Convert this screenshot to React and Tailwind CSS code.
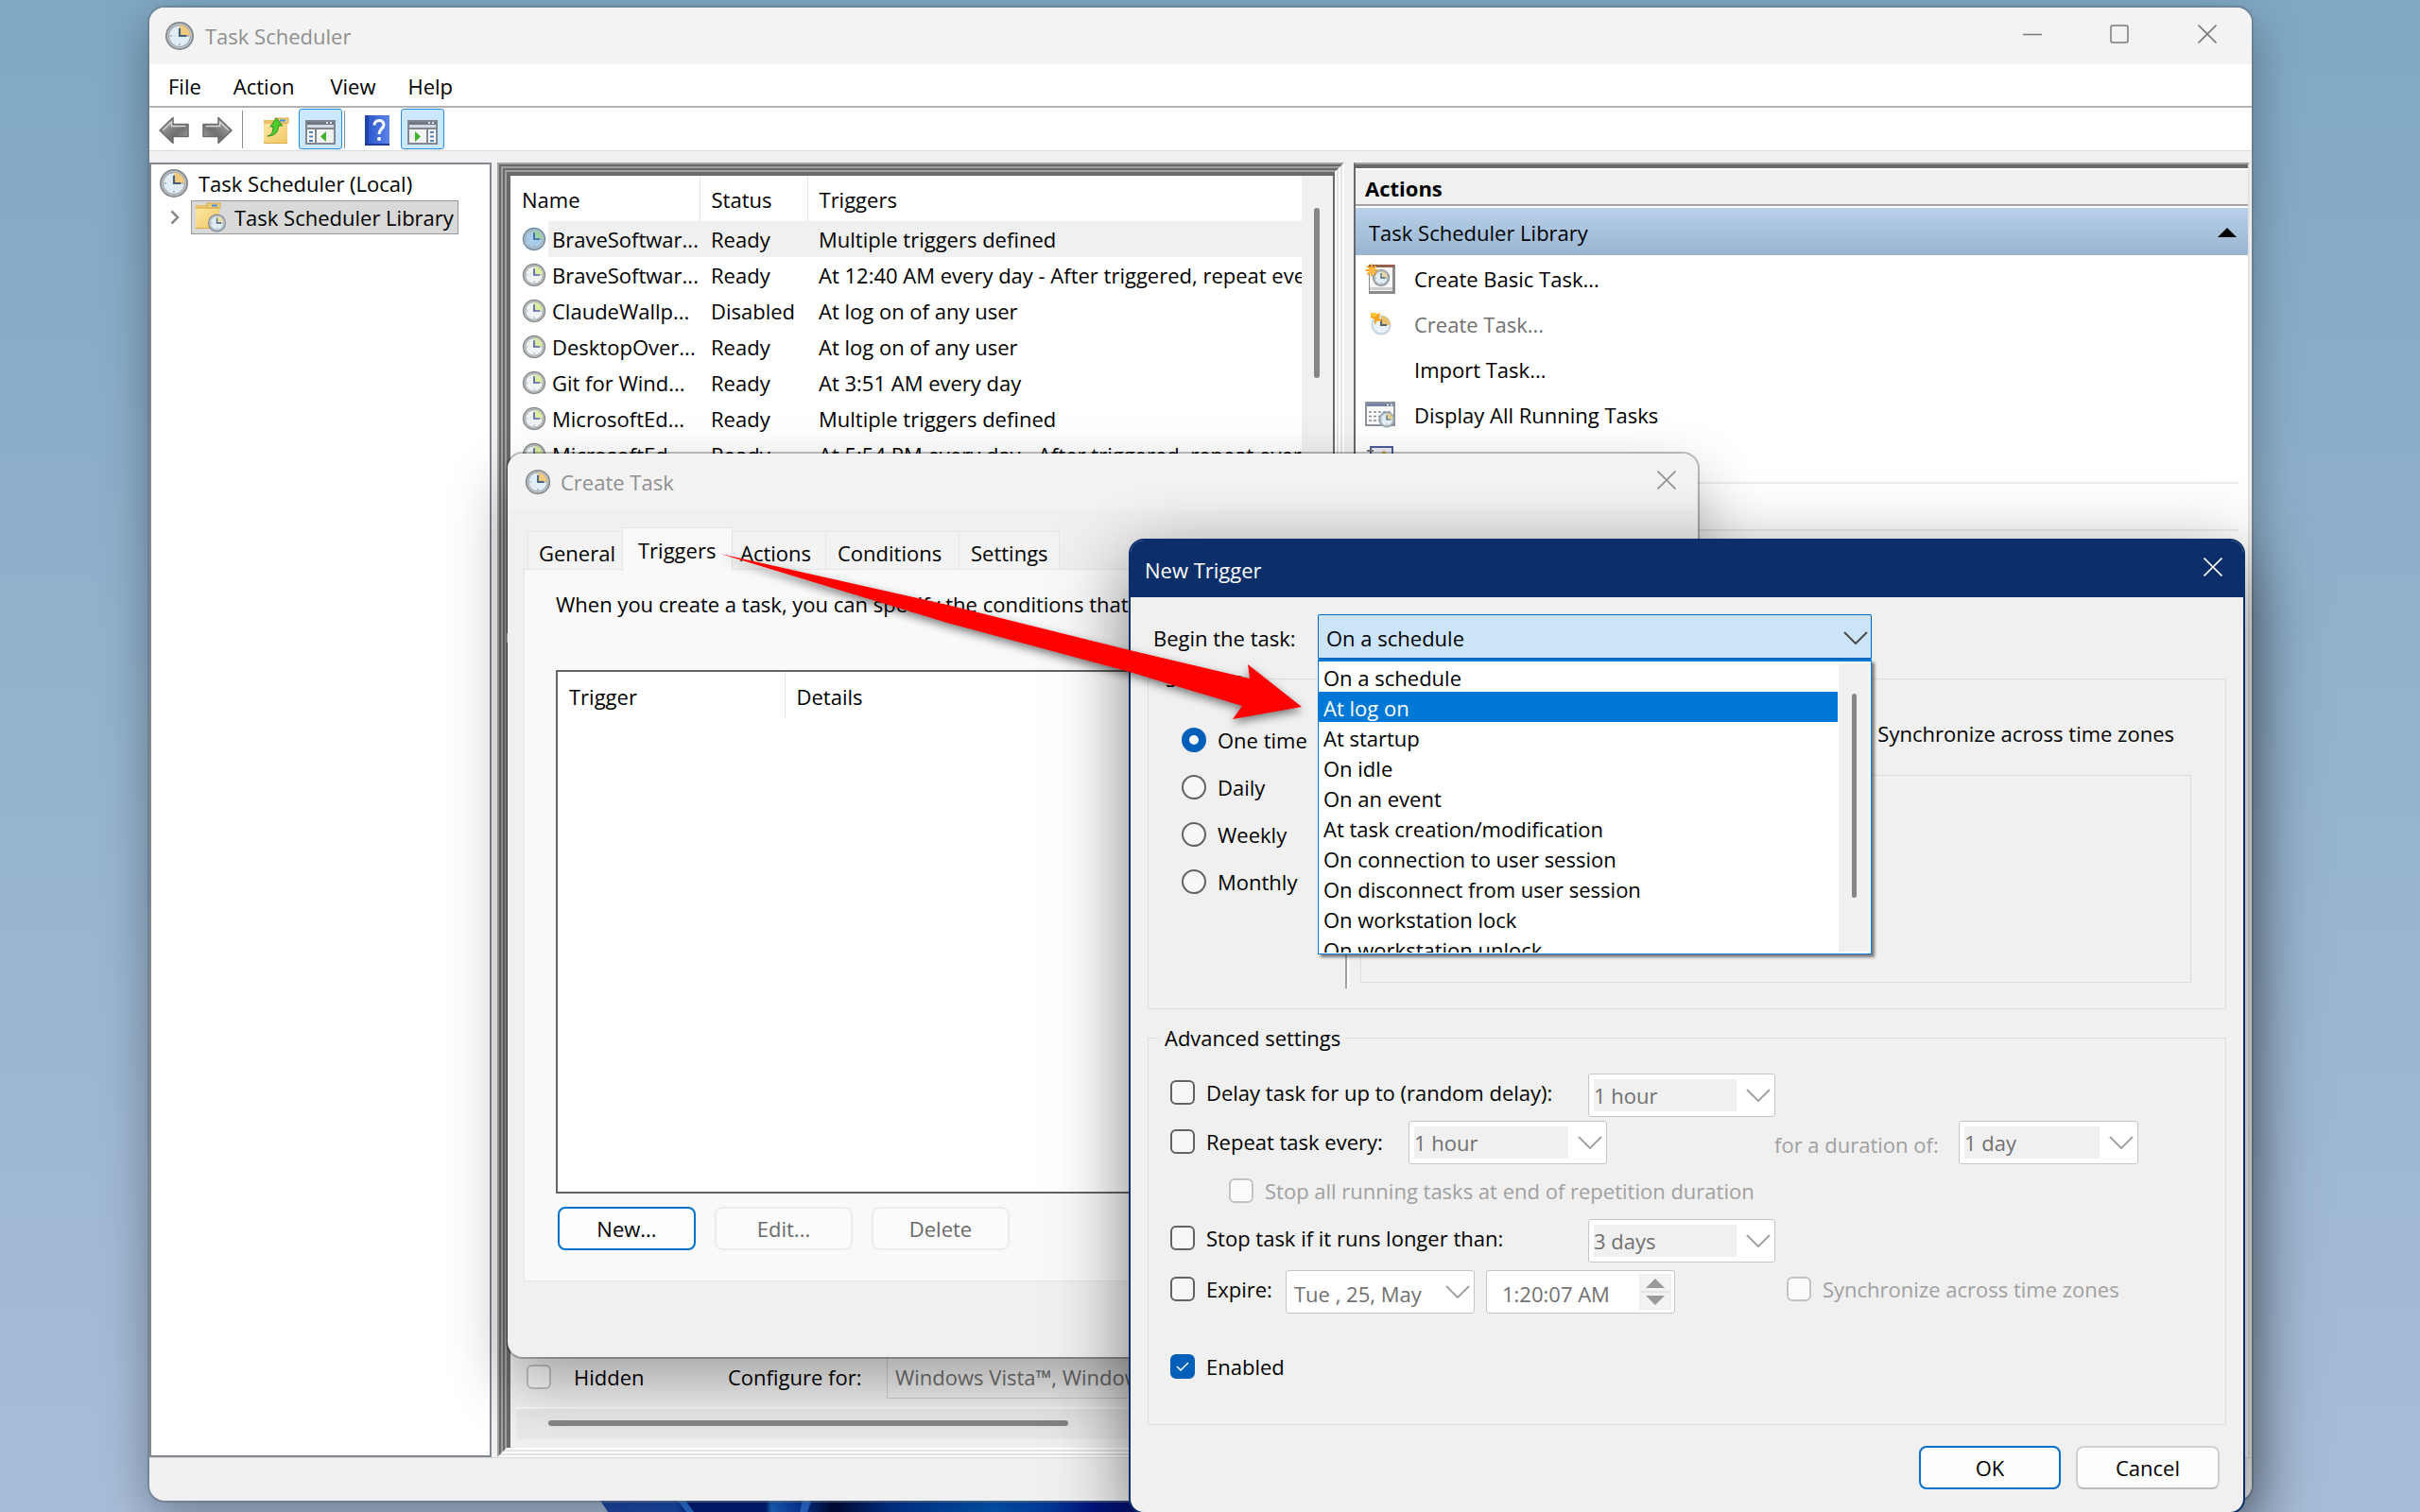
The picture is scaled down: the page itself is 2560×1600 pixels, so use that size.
import React from "react";

const tasks = [
  { name: "BraveSoftwar...", status: "Ready", trigger: "Multiple triggers defined", selected: true },
  { name: "BraveSoftwar...", status: "Ready", trigger: "At 12:40 AM every day - After triggered, repeat every 1 hour" },
  { name: "ClaudeWallp...", status: "Disabled", trigger: "At log on of any user" },
  { name: "DesktopOver...", status: "Ready", trigger: "At log on of any user" },
  { name: "Git for Wind...", status: "Ready", trigger: "At 3:51 AM every day" },
  { name: "MicrosoftEd...", status: "Ready", trigger: "Multiple triggers defined" },
  { name: "MicrosoftEd...", status: "Ready", trigger: "At 5:54 PM every day - After triggered, repeat every 1 hour" },
];

const triggerOptions = [
  "On a schedule",
  "At log on",
  "At startup",
  "On idle",
  "On an event",
  "At task creation/modification",
  "On connection to user session",
  "On disconnect from user session",
  "On workstation lock",
  "On workstation unlock",
];

/* ---------- icons ---------- */

function ClockFace({ cx = 16, cy = 16, r = 15, face = "#e2ecf4", ring = "#85888b", wedge = "#efc97e", hand = "#44617c" }) {
  const inner = r * 0.76;
  return (
    <g>
      <circle cx={cx} cy={cy} r={r} fill={ring} />
      <circle cx={cx} cy={cy} r={r * 0.88} fill="#c3c7ca" />
      <circle cx={cx} cy={cy} r={inner} fill={face} stroke="#94a0aa" strokeWidth={r * 0.07} />
      <path d={`M${cx} ${cy}V${cy - inner}A${inner} ${inner} 0 0 1 ${cx + inner} ${cy}Z`} fill={wedge} />
      <path d={`M${cx} ${cy - r * 0.55}V${cy}H${cx + r * 0.5}`} fill="none" stroke={hand} strokeWidth={r * 0.14} />
      <path
        d={`M${cx - r * 0.66} ${cy}h${r * 0.12}M${cx} ${cy + r * 0.66}v${-r * 0.12}M${cx + r * 0.66} ${cy}h${-r * 0.1}`}
        stroke="#8fa3b3"
        strokeWidth={r * 0.09}
      />
    </g>
  );
}

function ClockIcon({ className = "size-8" }) {
  return (
    <svg viewBox="0 0 32 32" className={className} aria-hidden="true">
      <ClockFace />
    </svg>
  );
}

function TaskIcon({ selected }) {
  return (
    <svg viewBox="0 0 32 32" className="size-[26px]" aria-hidden="true">
      {selected ? (
        <ClockFace face="#a9cde8" ring="#5f89a8" wedge="#9fd3a6" hand="#2e5fa0" />
      ) : (
        <ClockFace face="#f1f4f4" ring="#8a8a87" wedge="#dceca0" hand="#5562a8" />
      )}
    </svg>
  );
}

function FolderShape() {
  return (
    <g>
      <path d="M1 3h12l2 3h11v22H1z" fill="#e9c162" />
      <rect x="13" y="1" width="14" height="5" fill="#f0cf7c" stroke="#d3a94d" />
      <rect x="18" y="2.500" width="6" height="2" fill="#3f8fe0" />
      <path d="M1 7h25v21H1z" fill="url(#folderFill)" />
      <path d="M1 27.500h25" stroke="#d9ab49" />
    </g>
  );
}

function IconDefs() {
  return (
    <svg width="0" height="0" className="absolute" aria-hidden="true">
      <defs>
        <linearGradient id="folderFill" x1="0" y1="0" x2="1" y2="1">
          <stop offset="0" stopColor="#fde6a2" />
          <stop offset="1" stopColor="#f0c763" />
        </linearGradient>
        <linearGradient id="arrowFill" x1="0" y1="0" x2="1" y2="1">
          <stop offset="0" stopColor="#b9b9b9" />
          <stop offset="0.6" stopColor="#6f6f6f" />
          <stop offset="1" stopColor="#b0b0b0" />
        </linearGradient>
        <linearGradient id="helpFill" x1="0" y1="0" x2="1" y2="0">
          <stop offset="0" stopColor="#1f3fae" />
          <stop offset="0.15" stopColor="#2f58cf" />
          <stop offset="1" stopColor="#5d85e8" />
        </linearGradient>
      </defs>
    </svg>
  );
}

function FolderClockIcon() {
  return (
    <svg viewBox="0 0 34 32" className="h-8 w-[34px]" aria-hidden="true">
      <FolderShape />
      <ClockFace cx={23.5} cy={22} r={9.5} ring="#7b8a94" wedge="#e8dcae" />
    </svg>
  );
}

function ArrowIcon({ flip }) {
  return (
    <svg viewBox="0 0 34 30" className={flip ? "h-[30px] w-[34px] -scale-x-100" : "h-[30px] w-[34px]"} aria-hidden="true">
      <path
        d="M2 15 16 1.500v7h16v13H16v7z"
        fill="url(#arrowFill)"
        stroke="#6a6a6a"
        strokeWidth="1.500"
        strokeLinejoin="round"
      />
      <path d="M5.500 14.500 14.500 6v4.500h15" fill="none" stroke="#d8d8d8" strokeWidth="1.300" />
    </svg>
  );
}

function FolderUpIcon() {
  return (
    <svg viewBox="0 0 28 30" className="h-[30px] w-7" aria-hidden="true">
      <FolderShape />
      <path d="M5 20c4-1 6-4 6-10H8L14.500 1l6 8H16.500c0 7-4 11-11.500 11z" fill="#4fce32" stroke="#2b8d1b" strokeWidth="1" strokeLinejoin="round" />
    </svg>
  );
}

function PaneIcon({ right }) {
  return (
    <svg viewBox="0 0 32 26" className="h-[26px] w-8" aria-hidden="true">
      <rect x="1" y="1" width="30" height="24" fill="#fff" stroke="#82878f" strokeWidth="2" />
      <rect x="2" y="2" width="28" height="3" fill="#6b7787" />
      <path d="M22 3h2M26 3h2" stroke="#d5e3f2" strokeWidth="2" />
      <rect x="2" y="5" width="28" height="3" fill="#d3dbe4" />
      <rect x="2" y="8" width="28" height="2" fill="#82878f" />
      {right ? (
        <g>
          <path d="M21 10v15" stroke="#82878f" strokeWidth="2" />
          <path d="M24 13h4M24 17.500h4M24 22h4" stroke="#4a7ec2" strokeWidth="1.800" />
          <rect x="2" y="10" width="18" height="14" fill="#f1f3f3" />
          <path d="M8 12v11l6-5.500z" fill="#43b02a" />
        </g>
      ) : (
        <g>
          <path d="M11 10v15" stroke="#82878f" strokeWidth="2" />
          <path d="M4 13h4M4 17.500h4M4 22h4" stroke="#4a7ec2" strokeWidth="1.800" />
          <rect x="12" y="10" width="18" height="14" fill="#f1f3f3" />
          <path d="M22 12v11l-6-5.500z" fill="#43b02a" />
        </g>
      )}
    </svg>
  );
}

function HelpIcon() {
  return (
    <svg viewBox="0 0 26 32" className="h-8 w-[26px]" aria-hidden="true">
      <rect width="26" height="32" fill="url(#helpFill)" />
      <path d="M0 0h4v32H0z" fill="#2443a8" />
      <path d="M0 30h26v2H0z" fill="#1f3a97" />
      <path d="M10 10.500c0-6.500 10-6.500 10-.5 0 4-5 4.500-5 10" fill="none" stroke="#fff" strokeWidth="3" />
      <circle cx="15" cy="25" r="2" fill="#fff" />
    </svg>
  );
}

function Spark({ cx, cy, r }) {
  const d = r * 0.7;
  return (
    <g>
      <path
        d={`M${cx - r} ${cy}H${cx + r}M${cx} ${cy - r}V${cy + r}M${cx - d} ${cy - d}L${cx + d} ${cy + d}M${cx + d} ${cy - d}L${cx - d} ${cy + d}`}
        stroke="#f5a623"
        strokeWidth="2"
      />
      <circle cx={cx} cy={cy} r={r * 0.5} fill="#ffb93b" />
    </g>
  );
}

function BasicTaskIcon() {
  return (
    <svg viewBox="0 0 32 32" className="size-8" aria-hidden="true">
      <rect x="4" y="1" width="28" height="31" fill="#8c8c8c" />
      <rect x="5" y="3" width="24" height="26" fill="#f6f6f6" />
      <path d="M4 1h27v3H4z" fill="#96604f" />
      <path d="M5 25h24v3H5z" fill="#cfcfcf" />
      <ClockFace cx={17} cy={15} r={9} ring="#7d8286" wedge="#e9d9a3" face="#dfeef2" />
      <Spark cx={7} cy={7} r={6.5} />
    </svg>
  );
}

function NewTaskIcon() {
  return (
    <svg viewBox="0 0 32 32" className="size-8" aria-hidden="true">
      <circle cx="17" cy="17" r="10.500" fill="#c4d3dd" />
      <circle cx="17" cy="17" r="8.500" fill="#e7f1f6" />
      <path d="M17 17V7a10 10 0 0 1 10 10z" fill="#e8c173" />
      <path d="M17 11v6h6" fill="none" stroke="#54656f" strokeWidth="2" />
      <path d="m6 4 5 2 5-2-1 5 3 4-5-.5L10 17V11L6 9z" fill="#fba41f" />
      <path d="M6 4h6v4H7z" fill="#ffc933" />
    </svg>
  );
}

function RunningTasksIcon() {
  return (
    <svg viewBox="0 0 32 28" className="h-7 w-8" aria-hidden="true">
      <rect x="1" y="1" width="30" height="24" fill="#fafafa" stroke="#8d939b" strokeWidth="2" />
      <rect x="2" y="2" width="28" height="3" fill="#7384a6" />
      <path d="M23 3.500h2M27 3.500h2" stroke="#fff" strokeWidth="1.500" />
      <path d="M4 11h23M4 15.500h14M4 20h12" stroke="#8a8a8a" strokeWidth="1.600" strokeDasharray="3 2" />
      <ClockFace cx={23} cy={19} r={8.5} ring="#8296a3" wedge="#e9d08f" face="#e0f0f5" />
    </svg>
  );
}

function HistoryIcon() {
  return (
    <svg viewBox="0 0 32 32" className="size-8" aria-hidden="true">
      <rect x="6" y="2" width="23" height="28" fill="#e8ebf3" stroke="#4c5d9b" strokeWidth="2" />
      <path d="M2 6h7M2 12h7" stroke="#777" strokeWidth="2" />
      <path d="m20 5 5 9H15z" fill="#d8bd3a" />
    </svg>
  );
}

function CloseIcon({ className }) {
  return (
    <svg viewBox="0 0 20 20" className={className} aria-hidden="true">
      <path d="M.5.5l19 19M19.500.5l-19 19" fill="none" stroke="currentColor" strokeWidth="1.600" />
    </svg>
  );
}

function Chevron({ className }) {
  return (
    <svg viewBox="0 0 26 14" className={className} aria-hidden="true">
      <path d="M1 1l12 12L25 1" fill="none" stroke="currentColor" strokeWidth="2" />
    </svg>
  );
}

/* ---------- form parts ---------- */

function CheckBox({ id, label, disabled, checked, className = "" }) {
  return (
    <label htmlFor={id} className={"flex h-10 shrink-0 items-center gap-3 whitespace-nowrap " + (disabled ? "text-[#a0a0a0] " : "text-black ") + className}>
      <span className="grid size-[26px] shrink-0 place-items-center">
        <input
          id={id}
          type="checkbox"
          disabled={disabled}
          defaultChecked={checked}
          className="peer col-start-1 row-start-1 size-[26px] appearance-none rounded-[6px] border-2 border-[#626262] bg-[#f7f7f7] checked:border-[#005fb8] checked:bg-[#005fb8] disabled:border-[#c3c3c3] disabled:bg-[#fbfbfb]"
        />
        <svg viewBox="0 0 14 10" className="pointer-events-none invisible col-start-1 row-start-1 h-[10px] w-[14px] peer-checked:visible" aria-hidden="true">
          <path d="M1 5l4 4 8-8" fill="none" stroke="#fff" strokeWidth="1.500" />
        </svg>
      </span>
      {label}
    </label>
  );
}

function DisabledCombo({ label, value, className }) {
  return (
    <div className={"flex h-[46px] shrink-0 items-center rounded-[3px] border border-[#c4c4c4] bg-white pl-[5px] pr-1 text-[#707070] " + className}>
      <select aria-label={label} disabled className="h-[34px] min-w-0 flex-1 appearance-none bg-[#f0f0f0] leading-8 opacity-100">
        <option>{value}</option>
      </select>
      <Chevron className="ml-2.5 h-3.5 w-[26px] text-[#a3a3a3]" />
    </div>
  );
}

/* Sunken edge made of alternating dark and light lines */
function Sunken({ children, depth = 0, max = 4 }) {
  const edge =
    depth % 2 === 0
      ? "border-t-[#a0a0a0] border-l-[#a0a0a0] border-r-white border-b-white"
      : "border-t-[#696969] border-l-[#696969] border-r-[#e3e3e3] border-b-[#e3e3e3]";
  return (
    <div className={"flex min-h-0 min-w-0 flex-1 flex-col border-2 " + edge}>
      {depth + 1 < max ? (
        <Sunken depth={depth + 1} max={max}>
          {children}
        </Sunken>
      ) : (
        children
      )}
    </div>
  );
}

/* ---------- main window ---------- */

function TitleBar() {
  return (
    <header className="flex h-[60px] shrink-0 items-center bg-[#f3f3f3] pl-4">
      <ClockIcon />
      <h1 className="ml-[11px] flex-1 text-[#8f8f8f]">Task Scheduler</h1>
      <button type="button" aria-label="Minimize" className="flex h-full w-[92px] items-center justify-center pb-1 text-[#7a7a7a]">
        <svg viewBox="0 0 20 20" className="size-5">
          <path d="M0 10.500h20" stroke="currentColor" strokeWidth="1.500" />
        </svg>
      </button>
      <button type="button" aria-label="Maximize" className="flex h-full w-[92px] items-center justify-center pb-1 text-[#7a7a7a]">
        <svg viewBox="0 0 20 20" className="size-5">
          <rect x="1" y="1" width="18" height="18" rx="2" fill="none" stroke="currentColor" strokeWidth="1.500" />
        </svg>
      </button>
      <button type="button" aria-label="Close" className="flex h-full w-[94px] items-center justify-center pb-1 text-[#7a7a7a]">
        <CloseIcon className="size-5" />
      </button>
    </header>
  );
}

function MenuBar() {
  return (
    <nav className="flex h-[46px] shrink-0 items-center gap-[34px] border-b-2 border-[#b2b2b2] bg-white pl-5 pt-0.5">
      <button type="button">File</button>
      <button type="button">Action</button>
      <button type="button" className="ml-1">View</button>
      <button type="button">Help</button>
    </nav>
  );
}

function Toolbar() {
  return (
    <div className="flex h-[46px] shrink-0 items-center border-b border-[#dadada] bg-white pl-[9px]">
      <button type="button" aria-label="Back" className="pt-0.5"><ArrowIcon /></button>
      <button type="button" aria-label="Forward" className="ml-3 pt-0.5"><ArrowIcon flip /></button>
      <span className="ml-[9px] h-10 w-px bg-[#8d8d8d]" />
      <button type="button" aria-label="Up one level" className="ml-[21px] pt-1"><FolderUpIcon /></button>
      <button type="button" aria-label="Show or hide console tree" className="ml-2.5 flex h-[43px] w-[46px] items-end justify-center rounded-[3px] border border-[#2a8dde] bg-[#cce8ff] pb-1">
        <PaneIcon />
      </button>
      <span className="ml-0.5 h-10 w-px bg-[#8d8d8d]" />
      <button type="button" aria-label="Help" className="ml-[21px] pt-0.5"><HelpIcon /></button>
      <button type="button" aria-label="Show or hide action pane" className="ml-3 flex h-[43px] w-[46px] items-end justify-center rounded-[3px] border border-[#2a8dde] bg-[#cce8ff] pb-1">
        <PaneIcon right />
      </button>
    </div>
  );
}

function TreePane() {
  return (
    <aside className="w-[362px] shrink-0 border-2 border-[#828790] bg-white pl-2 pt-0.5">
      <div className="flex h-9 items-center gap-2.5">
        <ClockIcon />
        <span>Task Scheduler (Local)</span>
      </div>
      <div className="flex h-9 items-center">
        <button type="button" aria-label="Expand" className="flex w-[34px] justify-center">
          <svg viewBox="0 0 10 16" className="h-4 w-2.5" aria-hidden="true">
            <path d="M1.500 1.500 8 8l-6.500 6.500" fill="none" stroke="#8a8a8a" strokeWidth="2.500" />
          </svg>
        </button>
        <button type="button" className="flex h-9 items-center gap-2 border border-[#999] bg-[#d9d9d9] pl-[3px] pr-1">
          <FolderClockIcon />
          <span>Task Scheduler Library</span>
        </button>
      </div>
    </aside>
  );
}

function TaskTable() {
  return (
    <section className="flex h-[488px] shrink-0 border-2 border-l-4 border-t-4 border-[#696969] bg-white">
      <div className="min-w-0 flex-1 overflow-hidden">
        <table className="w-full table-fixed border-collapse text-left">
          <colgroup>
            <col className="w-10" />
            <col className="w-[160px]" />
            <col className="w-[114px]" />
            <col />
          </colgroup>
          <thead>
            <tr className="h-12">
              <th colSpan={2} className="border-r border-[#e5e5e5] pl-3 pt-0.5 font-normal">Name</th>
              <th className="border-r border-[#e5e5e5] pl-3 pt-0.5 font-normal">Status</th>
              <th className="pl-3 pt-0.5 font-normal">Triggers</th>
            </tr>
          </thead>
          <tbody>
            {tasks.map((t, i) => (
              <tr key={i} className="h-[38px]">
                <td className="pl-3"><TaskIcon selected={t.selected} /></td>
                <td className={"whitespace-nowrap pl-1 " + (t.selected ? "bg-[#f0f0f0]" : "")}>{t.name}</td>
                <td className={"whitespace-nowrap pl-3 " + (t.selected ? "bg-[#f0f0f0]" : "")}>{t.status}</td>
                <td className={"overflow-hidden whitespace-nowrap pl-3 " + (t.selected ? "bg-[#f0f0f0]" : "")}>{t.trigger}</td>
              </tr>
            ))}
          </tbody>
        </table>
      </div>
      <div className="w-[33px] shrink-0 bg-[#f0f0f0] pl-[13px] pt-[34px]">
        <div className="h-[180px] w-1.5 rounded-full bg-[#858585]" />
      </div>
    </section>
  );
}

function PreviewPane() {
  return (
    <section className="mt-2.5 flex min-h-0 flex-1 flex-col justify-end border-l-4 border-t-4 border-[#696969] bg-[#f0f0f0]">
      <div className="flex h-[46px] items-center">
        <CheckBox id="hidden" label={<span className="ml-3 text-black">Hidden</span>} disabled className="ml-[17px] w-[213px]" />
        <label htmlFor="configure" className="w-[168px]">Configure for:</label>
        <select id="configure" disabled className="h-[46px] w-[420px] appearance-none border border-[#cfcfcf] px-2 text-[#707070] opacity-100">
          <option>Windows Vista™, Windows Server™ 2008</option>
        </select>
      </div>
      <div className="mb-[9px] ml-1.5 mt-[9px] h-[34px] border-t-2 border-[#fafafa] bg-[#e8e8e8] pl-[34px] pt-3">
        <div className="h-1.5 w-[550px] rounded-full bg-[#858585]" />
      </div>
    </section>
  );
}

function ActionRow({ icon, label, muted }) {
  return (
    <button type="button" className={"flex h-12 w-full items-center pl-2.5 pt-0.5 text-left " + (muted ? "text-[#707070]" : "text-black")}>
      <span className="mr-5 flex h-8 w-8 items-center">{icon}</span>
      {label}
    </button>
  );
}

function ActionsPane() {
  return (
    <aside className="flex w-[948px] shrink-0 flex-col border-x-2 border-t-2 border-l-[#696969] border-r-[#e3e3e3] border-t-[#a0a0a0]">
      <div className="flex min-h-0 flex-1 flex-col border-t-4 border-[#696969] bg-white">
        <h2 className="mt-0.5 flex h-[38px] shrink-0 items-center border-b-2 border-[#a0a0a0] bg-[#f0f0f0] pl-2.5 pt-0.5 font-bold">Actions</h2>
        <button type="button" className="mt-0.5 flex h-[50px] w-full shrink-0 items-center justify-between bg-linear-to-b from-[#b9d1ea] to-[#99b4d1] pl-3.5 pr-3 pt-0.5">
          <span>Task Scheduler Library</span>
          <svg viewBox="0 0 20 10" className="h-2.5 w-5" aria-hidden="true">
            <path d="M10 0l10 10H0z" />
          </svg>
        </button>
        <ActionRow icon={<BasicTaskIcon />} label="Create Basic Task..." />
        <ActionRow icon={<NewTaskIcon />} label="Create Task..." muted />
        <ActionRow label="Import Task..." />
        <ActionRow icon={<RunningTasksIcon />} label="Display All Running Tasks" />
        <ActionRow icon={<HistoryIcon />} label="Enable All Tasks History" />
        <hr className="mr-2.5 border-t-2 border-[#ededed]" />
        <ActionRow label="New Folder..." />
        <hr className="mr-2.5 border-t-2 border-[#ededed]" />
      </div>
    </aside>
  );
}

/* ---------- dialogs ---------- */

function CreateTaskDialog() {
  const idleTab = "-ml-px h-10 border border-b-0 border-[#e5e5e5] bg-[#f3f3f3] text-left";
  return (
    <section
      aria-label="Create Task"
      className="absolute left-[537px] top-[480px] flex h-[956px] w-[1259px] flex-col overflow-hidden rounded-2xl bg-[#f0f0f0] shadow-[0_0_0_2px_rgba(0,0,0,0.25),0_28px_64px_rgba(0,0,0,0.32)]"
    >
      <header className="flex h-[60px] items-center bg-[#f3f3f3] pl-[18px] pr-[23px]">
        <ClockIcon className="size-7" />
        <h2 className="ml-2.5 flex-1 text-[#8f8f8f]">Create Task</h2>
        <button type="button" aria-label="Close" className="pb-1 text-[#8f8f8f]">
          <CloseIcon className="size-5" />
        </button>
      </header>
      <div className="mt-[18px] flex h-11 items-end pl-[22px]">
        <button type="button" className={idleTab + " w-[101px] pl-[11px] pt-1"}>General</button>
        <button type="button" className="relative z-10 -mb-0.5 -ml-px h-[46px] w-[117px] border border-b-0 border-[#e5e5e5] bg-[#f9f9f9] pl-4 text-left">Triggers</button>
        <button type="button" className={idleTab + " w-[100px] pl-2 pt-1"}>Actions</button>
        <button type="button" className={idleTab + " w-[142px] pl-3 pt-1"}>Conditions</button>
        <button type="button" className={idleTab + " w-[107px] pl-3 pt-1"}>Settings</button>
      </div>
      <div className="mx-[17px] h-[754px] border border-[#e5e5e5] bg-[#f9f9f9] px-[33px] pt-5">
        <p className="whitespace-nowrap">When you create a task, you can specify the conditions that will trigger the task.</p>
        <div className="mt-[54px] h-[554px] border-2 border-[#646464] bg-white">
          <table className="w-full table-fixed text-left">
            <thead>
              <tr className="h-12">
                <th className="w-[240px] border-r border-[#e5e5e5] pl-3 pt-1 font-normal">Trigger</th>
                <th className="pl-3 pt-1 font-normal">Details</th>
              </tr>
            </thead>
          </table>
        </div>
        <div className="mt-3.5 flex gap-5 pl-0.5">
          <button type="button" className="h-[46px] w-[146px] rounded-lg border-2 border-[#0070cc] bg-[#fdfdfd]">New...</button>
          <button type="button" disabled className="h-[46px] w-[146px] rounded-lg border-2 border-[#ececec] bg-[#fbfbfb] text-[#6a6a6a]">Edit...</button>
          <button type="button" disabled className="h-[46px] w-[146px] rounded-lg border-2 border-[#ececec] bg-[#fbfbfb] text-[#6a6a6a]">Delete</button>
        </div>
      </div>
    </section>
  );
}

function TriggerCombo() {
  return (
    <div className="relative w-[586px]">
      <select
        id="begin"
        defaultValue="On a schedule"
        className="h-12 w-full appearance-none rounded-[2px] border border-b-2 border-[#0067c0] bg-[#cce4f7] px-2 pt-0.5"
      >
        {triggerOptions.map((o) => (
          <option key={o}>{o}</option>
        ))}
      </select>
      <Chevron className="pointer-events-none absolute right-1 top-[18px] h-3.5 w-[26px] text-[#4c4c4c]" />
      <div className="absolute left-0 top-12 z-20 flex h-[312px] w-full border border-t-2 border-[#0078d7] bg-white shadow-[3px_3px_3px_rgba(0,0,0,0.5)]">
        <ul role="listbox" aria-label="Begin the task" className="h-[308px] flex-1 overflow-hidden">
          {triggerOptions.map((o) => (
            <li
              key={o}
              role="option"
              aria-selected={o === "At log on"}
              className={"flex h-8 items-center whitespace-nowrap pl-[5px] pt-0.5 " + (o === "At log on" ? "bg-[#0078d7] text-white" : "text-black")}
            >
              {o}
            </li>
          ))}
        </ul>
        <div className="mb-0.5 ml-px mr-0.5 mt-0.5 w-8 bg-[#f0f0f0] pl-3.5 pt-8">
          <div className="h-[216px] w-[5px] rounded-full bg-[#858585]" />
        </div>
      </div>
    </div>
  );
}

function NewTriggerDialog() {
  return (
    <section
      aria-label="New Trigger"
      className="absolute left-[1194px] top-[570px] flex w-[1181px] flex-col overflow-hidden rounded-2xl border-2 border-[#0c2f69] bg-[#f0f0f0] pb-6 shadow-[0_24px_80px_rgba(0,0,0,0.5)]"
    >
      <header className="flex h-[60px] items-center justify-between bg-[#0c2f69] pl-[15px] pr-[22px] text-white">
        <h2 className="pt-0.5">New Trigger</h2>
        <button type="button" aria-label="Close" className="pb-1">
          <CloseIcon className="size-5" />
        </button>
      </header>

      <div className="flex items-center pl-6 pt-[18px]">
        <label htmlFor="begin" className="w-[174px] whitespace-nowrap pt-0.5">Begin the task:</label>
        <TriggerCombo />
      </div>

      <fieldset className="mx-[18px] mt-1 h-[366px] border border-[#dcdcdc]">
        <legend className="ml-3 px-1.5">Settings</legend>
        <div className="flex items-start">
          <div className="w-[208px] shrink-0 pl-[35px] pt-6">
            {["One time", "Daily", "Weekly", "Monthly"].map((name) => (
              <label key={name} className="flex h-[50px] items-center gap-3 whitespace-nowrap">
                <input
                  type="radio"
                  name="schedule"
                  defaultChecked={name === "One time"}
                  className="size-[26px] shrink-0 appearance-none rounded-full border-2 border-[#626262] bg-[#f7f7f7] checked:border-8 checked:border-[#005fb8] checked:bg-white"
                />
                {name}
              </label>
            ))}
          </div>
          <div className="h-[312px] w-1 shrink-0 border-x-2 border-l-[#a0a0a0] border-r-white" />
          <div className="ml-3 mr-9 flex-1">
            <div className="flex h-[86px] items-center justify-end pb-0.5 pr-[18px]">
              <CheckBox id="sync" label="Synchronize across time zones" />
            </div>
            <div className="h-[220px] border border-[#dcdcdc]" />
          </div>
        </div>
      </fieldset>

      <fieldset className="mx-[18px] mt-3.5 h-[426px] border border-[#dcdcdc] pl-[23px]">
        <legend className="-ml-3 px-1.5">Advanced settings</legend>
        <div className="flex pt-[22px]">
          <CheckBox id="delay" label="Delay task for up to (random delay):" className="w-[442px]" />
          <DisabledCombo label="Random delay" value="1 hour" className="w-[198px]" />
        </div>
        <div className="mt-1 flex">
          <CheckBox id="repeat" label="Repeat task every:" className="mt-0.5 w-[252px]" />
          <DisabledCombo label="Repeat interval" value="1 hour" className="w-[210px]" />
          <span className="ml-[177px] w-[195px] self-center whitespace-nowrap pt-1 text-[#a0a0a0]">for a duration of:</span>
          <DisabledCombo label="Duration" value="1 day" className="w-[190px]" />
        </div>
        <div className="mt-2 flex pl-[62px]">
          <CheckBox id="stop-all" label="Stop all running tasks at end of repetition duration" disabled />
        </div>
        <div className="mt-2.5 flex">
          <CheckBox id="stop-long" label="Stop task if it runs longer than:" className="w-[442px]" />
          <DisabledCombo label="Longest run time" value="3 days" className="w-[198px]" />
        </div>
        <div className="mt-2 flex">
          <CheckBox id="expire" label="Expire:" className="w-[122px]" />
          <div className="flex h-[46px] w-[200px] items-center rounded-[3px] border border-[#c4c4c4] bg-white pr-1 text-[#707070]">
            <input aria-label="Expiry date" disabled defaultValue="Tue , 25, May" className="h-full min-w-0 flex-1 pl-2 pt-1" />
            <Chevron className="h-3.5 w-[26px] text-[#a3a3a3]" />
          </div>
          <div className="ml-3 flex h-[46px] w-[200px] items-center rounded-[3px] border border-[#c4c4c4] bg-white pr-[3px] text-[#707070]">
            <input aria-label="Expiry time" disabled defaultValue="1:20:07 AM" className="h-full min-w-0 flex-1 pl-4 pt-1" />
            <div className="flex h-[38px] w-[34px] flex-col border-2 border-[#f0f0f0] text-[#9a9a9a]">
              <button type="button" disabled aria-label="Later" className="flex flex-1 items-center justify-center border-b border-[#e4e4e4] bg-[#f3f3f3]">
                <svg viewBox="0 0 20 10" className="h-2.5 w-5" aria-hidden="true"><path d="M10 0l10 10H0z" fill="currentColor" /></svg>
              </button>
              <button type="button" disabled aria-label="Earlier" className="flex flex-1 items-center justify-center border-t border-[#e4e4e4] bg-[#f3f3f3]">
                <svg viewBox="0 0 20 10" className="h-2.5 w-5" aria-hidden="true"><path d="M10 10L0 0h20z" fill="currentColor" /></svg>
              </button>
            </div>
          </div>
          <CheckBox id="sync-expire" label="Synchronize across time zones" disabled className="ml-[118px]" />
        </div>
        <div className="mt-9 flex">
          <CheckBox id="enabled" label="Enabled" checked />
        </div>
      </fieldset>

      <footer className="mt-[22px] flex justify-end gap-4 pr-[25px]">
        <button type="button" className="h-[46px] w-[150px] rounded-lg border-2 border-[#0070cc] bg-[#fdfdfd]">OK</button>
        <button type="button" className="h-[46px] w-[152px] rounded-lg border-2 border-[#d0d0d0] border-b-[#bcbcbc] bg-[#fdfdfd]">Cancel</button>
      </footer>
    </section>
  );
}

function Wallpaper() {
  return (
    <svg viewBox="0 0 600 20" preserveAspectRatio="none" className="absolute bottom-0 left-[630px] h-5 w-[600px]" aria-hidden="true">
      <defs>
        <linearGradient id="bloom" x1="0" x2="1" y1="0" y2="0">
          <stop offset="0" stopColor="#2048a8" />
          <stop offset="0.14" stopColor="#1c50b8" />
          <stop offset="0.17" stopColor="#001f80" />
          <stop offset="0.3" stopColor="#001f80" />
          <stop offset="0.31" stopColor="#1c6fd6" />
          <stop offset="0.36" stopColor="#0a3fae" />
          <stop offset="0.42" stopColor="#000c3c" />
          <stop offset="0.52" stopColor="#0038a0" />
          <stop offset="0.7" stopColor="#0060c8" />
          <stop offset="0.8" stopColor="#0048c0" />
          <stop offset="0.88" stopColor="#0018a0" />
          <stop offset="1" stopColor="#001880" />
        </linearGradient>
      </defs>
      <path d="M0 0h600v20H13z" fill="url(#bloom)" />
      <path d="M92 4l12 16h-8L84 4zM230 4h-10l-4 16h8z" fill="#2b74e0" />
    </svg>
  );
}

function PointerArrow() {
  return (
    <svg viewBox="0 0 640 200" className="pointer-events-none absolute left-[750px] top-[570px] z-30 h-[200px] w-[640px] drop-shadow-[0_4px_5px_rgba(0,0,0,0.5)]" aria-hidden="true">
      <path d="M12 16 252 70 445 118 572 148 570 133 627 178 554 191 564 177 445 141 252 89z" fill="#ff0000" />
    </svg>
  );
}

export default function App() {
  return (
    <main className="relative h-screen w-full overflow-hidden bg-linear-to-b from-[#80a8c4] to-[#a8bdd8] font-['Open_Sans','Noto_Sans',sans-serif] text-[22px] leading-8 text-black">
      <IconDefs />
      <Wallpaper />
      <div className="absolute bottom-3 left-[158px] right-[178px] top-2 flex flex-col overflow-hidden rounded-2xl bg-[#f0f0f0] shadow-[0_0_0_2px_rgba(100,115,130,0.55),0_16px_50px_rgba(0,0,0,0.35)]">
        <TitleBar />
        <MenuBar />
        <Toolbar />
        <div className="flex min-h-0 flex-1 pr-0.5 pt-3">
          <TreePane />
          <div className="ml-1.5 mr-2.5 flex min-w-0 flex-1">
            <Sunken max={5}>
              <TaskTable />
              <PreviewPane />
            </Sunken>
          </div>
          <ActionsPane />
        </div>
        <div className="h-[46px] shrink-0 border-t border-[#d7d7d7]" />
      </div>
      <CreateTaskDialog />
      <NewTriggerDialog />
      <PointerArrow />
    </main>
  );
}
